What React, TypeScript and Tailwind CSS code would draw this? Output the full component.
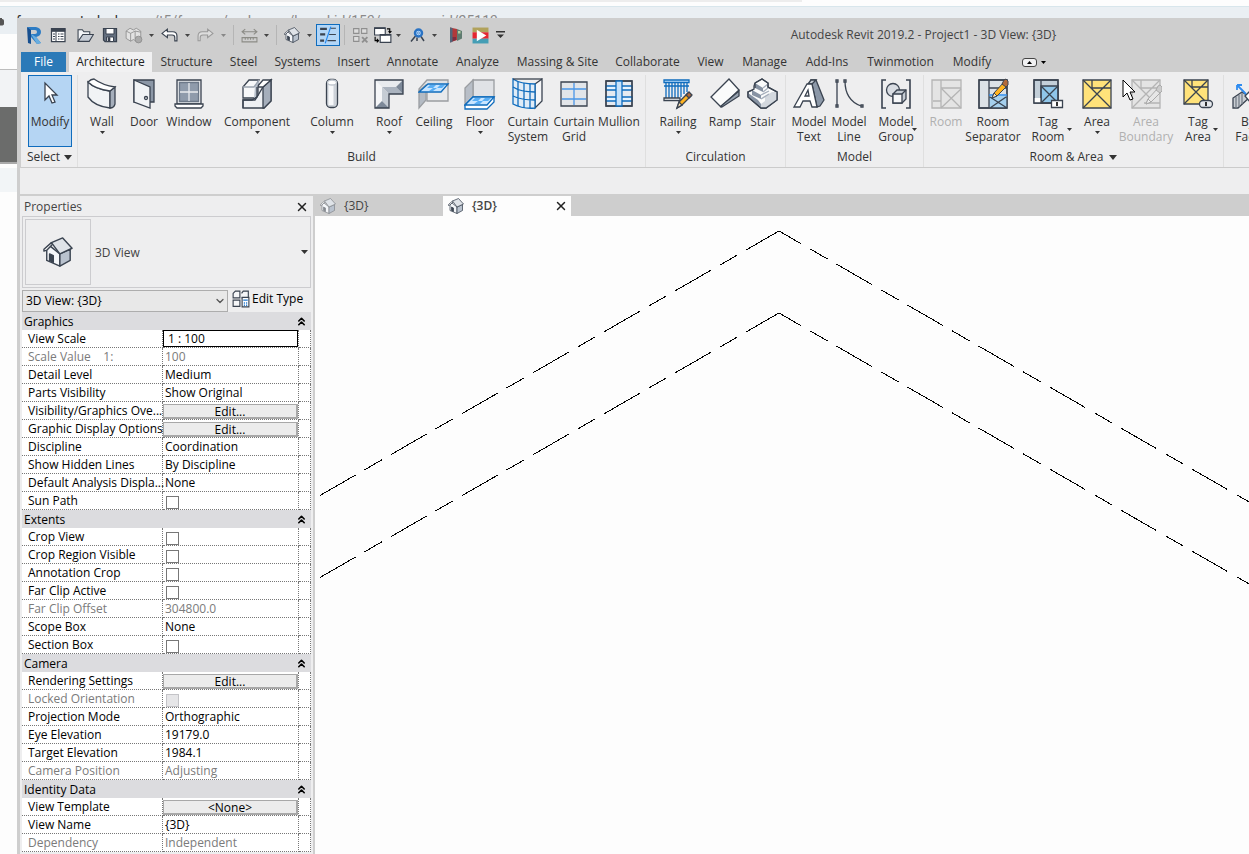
import React from "react";
import { ChevronDown, ChevronsUp, Lock, X } from "lucide-react";
import { clsx } from "clsx";

const ink = "#3a4350";
const blue = "#0f6cbd";

function Svg({ size = 32, children }: { size?: number; children: React.ReactNode }) {
  return (
    <svg width={size} height={size} viewBox="0 0 32 32" fill="none" stroke={ink} strokeWidth="1.3" className="shrink-0" aria-hidden="true">
      {children}
    </svg>
  );
}

function Caret({ className = "" }: { className?: string }) {
  return (
    <svg width="5" height="3" viewBox="0 0 5 3" className={clsx("shrink-0", className)} aria-hidden="true">
      <path d="M0 0h5L2.500 3z" fill="currentColor" />
    </svg>
  );
}

function House({ size = 32, stroke = ink }: { size?: number; stroke?: string }) {
  return (
    <svg width={size} height={size} viewBox="0 0 32 32" stroke={stroke} strokeWidth="1.5" strokeLinejoin="round" className="shrink-0" aria-hidden="true">
      <path d="M4 14l4-4 10 8v13L4 25z" fill="#f4f6f9" />
      <path d="M18 18l11-5v12l-11 6z" fill="#b9c2ce" />
      <path d="M1 13l8-7 2 1-7 7-3 1z" fill="#fff" />
      <path d="M9 6l12-5 10 11-13 6z" fill="#dfe3e8" />
      <path d="M7 18l4 2v7l-4-2z" fill={stroke} />
    </svg>
  );
}

function Pencil({ muted = false }: { muted?: boolean }) {
  return (
    <g stroke={muted ? "#a9a9a9" : ink} strokeWidth="1">
      <path d="M17 15L27 4l4 3-11 11-5 2z" fill={muted ? "#e6e6e6" : "#ffb320"} />
      <path d="M25 6l2-4 2-1 2 2v4l-2 2z" fill={muted ? "#ccc" : "#b36a3a"} />
      <path d="M17 15l3 3-5 2z" fill={muted ? "#eee" : "#ffe7bb"} />
    </g>
  );
}

/* ---------- ribbon drawings ---------- */

const icons: Record<string, React.ReactNode> = {
  Modify: (
    <Svg>
      <path d="M11 5v17l4-4 3 7 3-1-3-7h5z" fill="#fff" />
    </Svg>
  ),
  Wall: (
    <Svg>
      <path d="M2 4c7 7 16 8 22 9v17C15 29 7 26 2 19z" fill="#f1f3f5" />
      <path d="M24 13l5-4v17q-1 4-5 4z" fill="#a5aebb" />
      <path d="M2 4q3-3 6-3c7 5 14 7 21 8l-5 4C16 12 8 10 2 4z" fill="#fff" />
    </Svg>
  ),
  Door: (
    <Svg>
      <path d="M6 2h20v22H6z" fill="#8c97a6" />
      <path d="M6 2l16 7v21L6 24z" fill="#f1f3f5" />
      <circle cx="18" cy="20" r="1.500" />
    </Svg>
  ),
  Window: (
    <Svg>
      <path d="M4 2h24v24H4z" fill="#e9ebee" />
      <path d="M6.500 4.500h19v19h-19z" fill="#8f9bab" stroke="#6c7888" />
      <path d="M16 5v18M7 14h18" stroke="#e9ebee" />
      <path d="M2 26h28v2l-2 2H4l-2-2z" fill="#fff" />
    </Svg>
  ),
  Component: (
    <Svg>
      <path d="M22 9l8-7v21l-7 7H2v-8h9l5-3z" fill="#eef0f3" />
      <path d="M22 9l8-7v21l-7 7h-1z" fill="#a5aebb" />
      <path d="M16 9l6-7h8l-8 7z" fill="#fff" />
      <path d="M2 9l6-7h10l-1 2v13l-3 3H2z" fill="#f7f8f9" />
      <path d="M14 8l4-6v3l-2 3v10l-3 2z" fill="#b9c1cc" stroke="none" />
      <path d="M2 9h11l5-7" stroke="#9aa3af" />
      <path d="M2 30v-8h12l2-3V9" />
    </Svg>
  ),
  Column: (
    <Svg>
      <rect x="10.500" y="1.500" width="11" height="28" rx="4" fill="#cdd2d9" />
      <path d="M14 7v20M16 7v20" stroke="#f7f8fa" strokeWidth="3" />
      <ellipse cx="16" cy="4.500" rx="4.500" ry="2.500" fill="#fff" stroke="#c0c6ce" />
    </Svg>
  ),
  Roof: (
    <Svg>
      <g stroke="none">
        <path d="M2 2h28l-7 7H9z" fill="#e8ebef" />
        <path d="M2 2l7 7v14l-7 7z" fill="#f5f6f8" />
        <path d="M9 9h14l7 7H16z" fill="#aab3bf" />
        <path d="M9 9l7 7v14l-7-7z" fill="#c5ccd4" />
        <path d="M30 2l-7 7 7 7z" fill="#7d8999" />
        <path d="M2 30l7-7 7 7z" fill="#7d8999" />
      </g>
      <path d="M2 2h28v14H16v14H2z" />
    </Svg>
  ),
  Ceiling: (
    <Svg>
      <path d="M9 6h21v17H9z" fill="#e8e9eb" stroke="#9a9da1" />
      <path d="M1 13l7-6v15l-7 8z" fill="#b4bbc4" stroke="#9a9da1" />
      <path d="M1 11l8-9h21v5H8l-7 6z" fill="#dfe2e6" stroke="#9a9da1" />
      <path d="M1 14l9-8h20l-7 8z" fill="#c9e5ff" stroke={blue} />
      <path d="M12 7h6l-3 3H9zM22 7h5l-3 3h-5zM15 10h4l-4 3h-4z" fill="#58aef5" stroke="none" />
    </Svg>
  ),
  Floor: (
    <Svg>
      <path d="M9 2h21v18H9z" fill="#e0e2e6" stroke="#9a9da1" />
      <path d="M1 10l8-8v18l-8 7z" fill="#b8bec7" stroke="#9a9da1" />
      <path d="M1 27l8-8h21v5l-7 7H1z" fill="#fff" stroke={blue} />
      <path d="M1 27l8-8h21l-7 8z" fill="#c9e5ff" stroke={blue} />
      <path d="M11 20h6l-3 3H8zM21 20h6l-3 3h-6zM14 23h5l-3 3h-6z" fill="#58aef5" stroke="none" />
    </Svg>
  ),
  "Curtain System": (
    <Svg>
      <path d="M23 6l7-5v22l-7 7z" fill="#f5f6f8" />
      <path d="M1 1c6 4 15 5 22 5v24C14 31 7 29 1 26z" fill="#e1ecf7" stroke={blue} />
      <path d="M1 9c6 4 15 5 22 5M1 18c6 3 15 4 22 4M6 4v24M12 5v25M18 6v24" stroke={blue} />
      <path d="M1 1h29" />
    </Svg>
  ),
  "Curtain Grid": (
    <Svg>
      <path d="M3 4h26v24H3z" fill="#e2e5e9" />
      <path d="M16 5v22M4 11h24M4 21h24" stroke="#4a96e8" />
    </Svg>
  ),
  Mullion: (
    <Svg>
      <path d="M3 3h26v25H3z" fill="#e6eaf0" />
      <path d="M3 8h26v4H3zM3 19h26v4H3z" fill="#e5f3ff" stroke={blue} />
      <path d="M3 3h26v25H3z" />
      <path d="M13 3h6v25h-6z" fill="#c7e2fb" stroke={blue} />
    </Svg>
  ),
  Railing: (
    <Svg>
      <path d="M4 5v15M7 5v15M10 5v15M13 5v15M16 5v15M19 5v14M22 5v11M25 5v9" stroke={blue} />
      <path d="M2 2h25v2.500H2zM2 8h25" fill="#bfe0ff" stroke={blue} />
      <path d="M2 20h16v2.500H2z" fill="#fff" />
      <path d="M17 24l9-9 3 3-9 9-5 3z" fill="#ffb320" />
      <path d="M24 17l3-3 3 3-3 3z" fill="#b36a3a" />
      <path d="M17 24l3 3-5 3z" fill="#ffe7bb" />
    </Svg>
  ),
  Ramp: (
    <Svg>
      <path d="M2 19L20 1l10 11-18 17z" fill="#fafbfb" />
      <path d="M12 28l18-15v5L13 29z" fill="#98a3b1" />
    </Svg>
  ),
  Stair: (
    <Svg>
      <path d="M8 5l7-4 6 4v4l9 5v8l-11 8h-5L1 19v-5l6-3V8z" fill="#fafbfb" />
      <path d="M30 14v8l-11 8h-5v-4l4-3v-5l7-4z" fill="#d3d8de" stroke="none" />
      <path d="M8 5l8 5v4l-8-4zM5 12l9 5v4l-9-4zM1 15l10 7 3 4v3L1 19z" fill="#8793a3" stroke="none" />
      <path d="M16 10l5-4M16 14l5-4M14 17l8-4M14 21l8-5" stroke="#a5aebb" />
      <path d="M8 5l7-4 6 4v4l9 5v8l-11 8h-5L1 19v-5l5-2M8 5v5" />
    </Svg>
  ),
  "Model Text": (
    <Svg>
      <path d="M18 2h5l8 20-4 6-3 1z" fill="#8c98a8" />
      <path d="M15 6l3-4h5l-4 4z" fill="#c5ccd4" />
      <path d="M1 29L14 6h5l5 23h-5l-2-6h-7l-3 6zM12 18h4l-1-6z" fill="#fff" fillRule="evenodd" />
    </Svg>
  ),
  "Model Line": (
    <Svg>
      <path d="M4 3v25M12 3c0 12 5 21 16 25" />
      <path d="M3 2h2v2H3zM3 27h2v2H3zM11 2h2v2h-2zM28 27h2v2h-2z" fill="#fff" />
    </Svg>
  ),
  "Model Group": (
    <Svg>
      <path d="M6 2H2v28h4M26 2h4v28h-4" strokeWidth="1.600" />
      <circle cx="13" cy="12" r="6.500" fill="#d9dde3" />
      <path d="M13 16l4-4h9v9l-4 4h-9z" fill="#c5ccd4" />
      <path d="M13 16h9v9h-9z" fill="#f6f7f9" />
      <path d="M22 16l4-4" />
    </Svg>
  ),
  Room: (
    <Svg>
      <g stroke="#b4b4b4">
        <path d="M2 2h29v28H2z" fill="#e4e4e4" />
        <path d="M11 2v28M11 10h20M12 11l19 19M31 11L11 30M3 23h8" />
      </g>
    </Svg>
  ),
  "Room Separator": (
    <Svg>
      <path d="M2 2h28v28H2z" fill="#dce2e7" />
      <path d="M12 16h18v14H12z" fill="#a5d0ee" stroke="none" />
      <path d="M12 2v28M12 10h18M13 19l17 11M29 19L13 30M2 2h28v28H2z" />
      <path d="M12 17h18" stroke="#2f8cf0" />
      <Pencil />
    </Svg>
  ),
  "Tag Room": (
    <Svg>
      <path d="M2 2h24v23H2z" fill="#c3cfd9" />
      <path d="M9 8h17v17H9z" fill="#8fc6ea" />
      <path d="M2 20h7v5H2z" fill="#fff" stroke="none" />
      <path d="M9 2v23M9 8l17 17M26 8L9 25M2 2h24v23H2z" />
      <path d="M19.500 22.500h11v7h-11z" fill="#fff" />
      <path d="M25 24v4" strokeWidth="1.600" stroke="#000" />
    </Svg>
  ),
  Area: (
    <Svg>
      <path d="M2 2h28v28H2z" fill="#ffe27a" />
      <path d="M2 2l28 28M30 2L2 30M11 2v9M11 10h19" />
    </Svg>
  ),
  "Area Boundary": (
    <Svg>
      <g stroke="#b4b4b4">
        <path d="M2 2h28v28H2z" fill="#e4e4e4" />
        <path d="M2 2l20 20M30 2L2 30M11 2v9M11 10h19M14 25h16" />
      </g>
      <g transform="translate(1 6)">
        <Pencil muted />
      </g>
    </Svg>
  ),
  "Tag Area": (
    <Svg>
      <path d="M2 2h24v24H2z" fill="#ffe27a" />
      <path d="M2 2l24 24M26 2L2 26M10 2v7M10 9h16" />
      <rect x="17.500" y="22.500" width="13" height="7" rx="3.500" fill="#e6e9ed" />
      <path d="M24 24v4" strokeWidth="1.600" stroke="#000" />
    </Svg>
  ),
  "By Face": (
    <Svg>
      <path d="M1 30V20l9-6 8 5-12 11z" fill="#c9cdd3" />
      <path d="M4 30V19M7 29V17M10 26V15" stroke="#777f89" />
      <path d="M13 18L27 4l4 2v6L18 24z" fill="#fff" />
      <path d="M5 7l9 9M5 7h5M5 7v5" stroke="#2f8cf0" strokeWidth="1.800" />
    </Svg>
  ),
};

type Tool = { name: string; width: string; menu?: "below" | "side"; disabled?: boolean; pointer?: boolean };
type Group = { title: string; className: string; indent: string; menu?: boolean; tools: Tool[] };

const groups: Group[] = [
  {
    title: "Build",
    className: "w-[568px]",
    indent: "pl-1",
    tools: [
      { name: "Wall", width: "w-10", menu: "below" },
      { name: "Door", width: "w-11" },
      { name: "Window", width: "w-[46px]" },
      { name: "Component", width: "w-[90px]", menu: "below" },
      { name: "Column", width: "w-[60px]", menu: "below" },
      { name: "Roof", width: "w-[54px]", menu: "below" },
      { name: "Ceiling", width: "w-9" },
      { name: "Floor", width: "w-14", menu: "below" },
      { name: "Curtain System", width: "w-10" },
      { name: "Curtain Grid", width: "w-[52px]" },
      { name: "Mullion", width: "w-[38px]" },
    ],
  },
  {
    title: "Circulation",
    className: "w-[140px]",
    indent: "pl-[7px]",
    tools: [
      { name: "Railing", width: "w-[50px]", menu: "below" },
      { name: "Ramp", width: "w-11" },
      { name: "Stair", width: "w-8" },
    ],
  },
  {
    title: "Model",
    className: "w-[138px]",
    indent: "pl-[5px]",
    tools: [
      { name: "Model Text", width: "w-9" },
      { name: "Model Line", width: "w-11" },
      { name: "Model Group", width: "w-[50px]", menu: "side" },
    ],
  },
  {
    title: "Room & Area",
    className: "w-[300px]",
    indent: "pl-0.5",
    menu: true,
    tools: [
      { name: "Room", width: "w-10", disabled: true },
      { name: "Room Separator", width: "w-[54px]" },
      { name: "Tag Room", width: "w-14", menu: "side" },
      { name: "Area", width: "w-[42px]", menu: "below" },
      { name: "Area Boundary", width: "w-14", disabled: true, pointer: true },
      { name: "Tag Area", width: "w-12", menu: "side" },
    ],
  },
  { title: "", className: "w-14", indent: "", tools: [{ name: "By Face", width: "w-12" }] },
];

const ribbonTabs = [
  { name: "Structure", width: "w-[69px]" },
  { name: "Steel", width: "w-[45px]" },
  { name: "Systems", width: "w-[63px]" },
  { name: "Insert", width: "w-[49px]" },
  { name: "Annotate", width: "w-[69px]" },
  { name: "Analyze", width: "w-[61px]" },
  { name: "Massing & Site", width: "w-[99px]" },
  { name: "Collaborate", width: "w-[81px]" },
  { name: "View", width: "w-[45px]" },
  { name: "Manage", width: "w-[63px]" },
  { name: "Add-Ins", width: "w-[62px]" },
  { name: "Twinmotion", width: "w-[85px]" },
  { name: "Modify", width: "w-[58px]" },
];

function ToolButton({ tool }: { tool: Tool }) {
  return (
    <button
      disabled={tool.disabled}
      className={clsx(
        "relative flex h-[72px] shrink-0 flex-col items-center pt-[3px] leading-[15px]",
        tool.width,
        tool.disabled ? "text-[#b0b0b0]" : "text-[#333]"
      )}
    >
      {icons[tool.name]}
      <span className="mt-1 flex flex-col items-center whitespace-nowrap">
        {tool.name.split(" ").map((word) => (
          <span key={word}>{word}</span>
        ))}
      </span>
      {tool.menu === "below" && <Caret className="mt-0.5" />}
      {tool.menu === "side" && <Caret className="absolute bottom-4 right-1" />}
      {tool.pointer && (
        <svg width="14" height="23" viewBox="0 0 14 23" className="absolute left-1 top-1" aria-hidden="true">
          <path d="M1 1v17l4-4 3 7 3-1-3-7h5z" fill="#fff" stroke="#000" />
        </svg>
      )}
    </button>
  );
}

/* ---------- quick access toolbar ---------- */

function Quick({ label, width, children }: { label: string; width: string; children: React.ReactNode }) {
  return (
    <button aria-label={label} className={clsx("flex h-6 shrink-0 items-center justify-center text-[#444]", width)}>
      {children}
    </button>
  );
}

function Divider({ width }: { width: string }) {
  return (
    <div className={clsx("flex shrink-0 justify-center", width)}>
      <div className="h-5 w-px bg-[#b5b5b5]" />
    </div>
  );
}

function QuickAccess() {
  return (
    <div className="flex h-[34px] items-center">
      <Quick label="Revit" width="w-[25px]">
        <svg width="16" height="19" viewBox="0 0 16 19" className="shrink-0" aria-hidden="true">
          <path d="M1 1l4 2v15l-3-1z" fill="#174f8f" />
          <path d="M1 1h9q5 1 5 5t-5 5l5 6-4 1-6-7V8h4q2 0 2-2T9 4H5z" fill="#2d7cc4" />
          <path d="M5 8l5 3 5 6-4 1z" fill="#69aee0" />
        </svg>
      </Quick>
      <Quick label="Home" width="w-6">
        <Svg size={16}>
          <path d="M3 3h27v26H3z" fill="#fff" strokeWidth="2.500" />
          <path d="M3 3h27v6H3z" fill={ink} />
          <path d="M12 9v20M6 14h4M6 19h4M6 24h4M16 14h3M21 14h6M16 19h3M21 19h6M16 24h3M21 24h6" strokeWidth="2" />
        </Svg>
      </Quick>
      <Quick label="Open" width="w-[30px]">
        <Svg size={17}>
          <path d="M2 27V5h8l3 4h11v5" fill="#f3f5f8" strokeWidth="2" />
          <path d="M2 27l9-13h20l-8 13z" fill="#c8ced7" strokeWidth="2" />
        </Svg>
      </Quick>
      <Quick label="Save" width="w-5">
        <Svg size={16}>
          <path d="M3 3h26v26H6l-3-3z" fill="#657080" strokeWidth="2.500" />
          <path d="M8 3h16v11H8zM9 20h14v9H9z" fill="#fff" strokeWidth="2" />
          <path d="M12 21h4v7h-4z" fill={ink} />
        </Svg>
      </Quick>
      <Quick label="Synchronize" width="w-7">
        <Svg size={18}>
          <g stroke="#8d8d8d" strokeWidth="1.500">
            <path d="M2 9l7-5 6 3 5-3 8 5v13l-8 5-5-3-5 3-8-5z" fill="#e2e2e2" />
            <path d="M2 9l8 4v14M10 13l8-4 10 2M18 9v14" />
            <circle cx="24" cy="24" r="6" fill="#aaa" />
          </g>
        </Svg>
      </Quick>
      <Quick label="Synchronize menu" width="w-1.5"><Caret /></Quick>
      <Quick label="Undo" width="w-[30px]">
        <Svg size={17}>
          <path d="M12 4L2 12l10 8v-5h9q5 0 5 5v6h4v-9q0-8-8-8H12z" fill="#fff" strokeWidth="2.200" />
        </Svg>
      </Quick>
      <Quick label="Undo menu" width="w-1.5"><Caret /></Quick>
      <Quick label="Redo" width="w-[30px]">
        <Svg size={17}>
          <path d="M20 4l10 8-10 8v-5h-9q-5 0-5 5v6H2v-9q0-8 8-8h10z" fill="#ddd" stroke="#999" strokeWidth="2" />
        </Svg>
      </Quick>
      <Quick label="Redo menu" width="w-1.5"><Caret className="text-[#888]" /></Quick>
      <Divider width="w-3.5" />
      <Quick label="Measure" width="w-[18px]">
        <Svg size={17}>
          <path d="M2 9h28M8 4L2 9l6 5M24 4l6 5-6 5M2 20h28v8H2zM8 20v4M13 20v4M18 20v4M23 20v4" stroke="#8c8c86" strokeWidth="2" />
        </Svg>
      </Quick>
      <Quick label="Measure menu" width="w-4"><Caret /></Quick>
      <Divider width="w-[5px]" />
      <Quick label="Default 3D view" width="w-[25px]"><House size={16} /></Quick>
      <Quick label="3D view menu" width="w-2.5"><Caret /></Quick>
      <div className="flex w-7 shrink-0 justify-center">
        <button aria-label="Thin lines" className="flex h-[22px] w-6 items-center justify-center border border-[#0f6cbd] bg-[#b3d6f7]">
          <Svg size={18}>
            <path d="M2 5h12M2 15h9M2 26h7" strokeWidth="4" />
            <path d="M20 4h10M18 15h12M15 26h15" strokeWidth="2" />
            <path d="M21 1L11 31" stroke="#1f86f0" strokeWidth="2" />
          </Svg>
        </button>
      </div>
      <Divider width="w-1" />
      <Quick label="Close hidden windows" width="w-7">
        <Svg size={17}>
          <g stroke="#8f8f8f" strokeWidth="2">
            <path d="M3 3h10v9H3zM18 3h10v9H18zM3 18h10v9H3z" fill="#ddd" />
            <path d="M19 19l10 10M29 19L19 29" strokeWidth="3.500" />
          </g>
        </Svg>
      </Quick>
      <Quick label="Switch windows" width="w-[18px]">
        <Svg size={18}>
          <path d="M1 3h19v13H1zM11 15h19v14H11z" fill="#fff" strokeWidth="2" />
          <path d="M1 4h19M11 16h19" strokeWidth="3" />
          <path d="M23 5h5v6M26 9l2 3 3-3M7 26H2v-7M5 23l3 3-3 3" stroke="#000" strokeWidth="2" />
        </Svg>
      </Quick>
      <Quick label="Window menu" width="w-3"><Caret /></Quick>
      <Quick label="Find" width="w-7">
        <Svg size={16}>
          <path d="M11 18l-9 11M22 19l6 9M14 21v7" strokeWidth="3" />
          <circle cx="17" cy="12" r="7" fill="#b8dcff" stroke="#2a73c4" strokeWidth="5" />
          <circle cx="17" cy="12" r="2" fill="#fff" stroke="#1762b5" />
        </Svg>
      </Quick>
      <Quick label="Find menu" width="w-[5px]"><Caret /></Quick>
      <Quick label="Enscape" width="w-[38px]">
        <Svg size={16}>
          <g stroke="none">
            <path d="M4 1l14 3v22L4 31z" fill="#b23a3a" />
            <path d="M18 4l10 4v15l-10 5z" fill="#5f7b70" />
            <path d="M6 20h10v6L6 29z" fill="#7d2e40" />
            <path d="M4 1l5 1v28l-5 1z" fill="#526579" />
            <path d="M20 8h5v5h-5z" fill="#b5d0a0" />
          </g>
        </Svg>
      </Quick>
      <Quick label="Twinmotion" width="w-2.5">
        <Svg size={17}>
          <g stroke="none">
            <path d="M1 1h30v9H1z" fill="#b1a25b" />
            <path d="M1 10h30v12H1z" fill="#e52630" />
            <path d="M1 22h30v9H1z" fill="#459eb5" />
            <path d="M9 5l18 11L9 27z" fill="#fff" />
          </g>
        </Svg>
      </Quick>
      <Quick label="Customize" width="w-[30px]">
        <svg width="9" height="8" viewBox="0 0 9 8" className="shrink-0" aria-hidden="true">
          <path d="M0 0h9v1.500H0zM1 3.500h7L4.500 7z" fill="#333" />
        </svg>
      </Quick>
      <h1 className="flex-1 whitespace-nowrap pl-[83px] text-center text-[#444]">
        Autodesk Revit 2019.2 - Project1 - 3D View: {"{3D}"}
      </h1>
    </div>
  );
}

function RibbonTabs() {
  return (
    <nav className="flex h-5 items-stretch whitespace-nowrap text-[#333]">
      <button className="w-[45px] shrink-0 bg-[#2b7ab8] text-white">File</button>
      <button className="ml-[3px] w-[83px] shrink-0 bg-[#f1f1f2] text-[#222]">Architecture</button>
      {ribbonTabs.map((tab) => (
        <button key={tab.name} className={clsx("flex shrink-0 items-center justify-center", tab.width)}>
          {tab.name}
        </button>
      ))}
      <button aria-label="Minimize ribbon" className="ml-[21px] flex items-center gap-1 text-black">
        <span className="flex h-[9px] w-[15px] items-center justify-center rounded-[3px] border border-[#444] bg-[#f1f1f2]">
          <Caret className="rotate-180" />
        </span>
        <Caret />
      </button>
    </nav>
  );
}

function Ribbon() {
  return (
    <div className="flex h-24 overflow-hidden border-b border-[#cbcbcb] bg-[#eeeeef] pt-[3px]">
      <div className="flex w-[57px] shrink-0 flex-col border-r border-[#dfdfdf] pl-[7px] text-[#333]">
        <button className="flex h-[72px] w-11 flex-col items-center border border-[#0f6cbd] bg-[#b5d5f3] pt-0.5 leading-[15px]">
          {icons.Modify}
          <span className="mt-1">Modify</span>
        </button>
        <button className="-ml-1 flex h-5 items-center gap-1 whitespace-nowrap pl-[3px]">
          Select
          <svg width="8" height="5" viewBox="0 0 8 5" className="shrink-0" aria-hidden="true"><path d="M0 0h8L4 5z" fill="#333" /></svg>
        </button>
      </div>
      {groups.map((group) => (
        <section key={group.title} className={clsx("shrink-0 border-r border-[#dfdfdf]", group.className)}>
          <div className={clsx("flex", group.indent)}>
            {group.tools.map((tool) => (
              <ToolButton key={tool.name} tool={tool} />
            ))}
          </div>
          <div className="flex h-5 items-center justify-center gap-1.5 text-[#333]">
            {group.title}
            {group.menu && (
              <svg width="8" height="5" viewBox="0 0 8 5" aria-hidden="true"><path d="M0 0h8L4 5z" fill="#333" /></svg>
            )}
          </div>
        </section>
      ))}
    </div>
  );
}

/* ---------- properties palette ---------- */

type Row = { label: string; value?: string; kind?: "button" | "check" | "input"; muted?: boolean };

const sections: { title: string; rows: Row[] }[] = [
  {
    title: "Graphics",
    rows: [
      { label: "View Scale", value: "1 : 100", kind: "input" },
      { label: "Scale Value    1:", value: "100", muted: true },
      { label: "Detail Level", value: "Medium" },
      { label: "Parts Visibility", value: "Show Original" },
      { label: "Visibility/Graphics Ove...", value: "Edit...", kind: "button" },
      { label: "Graphic Display Options", value: "Edit...", kind: "button" },
      { label: "Discipline", value: "Coordination" },
      { label: "Show Hidden Lines", value: "By Discipline" },
      { label: "Default Analysis Displa...", value: "None" },
      { label: "Sun Path", kind: "check" },
    ],
  },
  {
    title: "Extents",
    rows: [
      { label: "Crop View", kind: "check" },
      { label: "Crop Region Visible", kind: "check" },
      { label: "Annotation Crop", kind: "check" },
      { label: "Far Clip Active", kind: "check" },
      { label: "Far Clip Offset", value: "304800.0", muted: true },
      { label: "Scope Box", value: "None" },
      { label: "Section Box", kind: "check" },
    ],
  },
  {
    title: "Camera",
    rows: [
      { label: "Rendering Settings", value: "Edit...", kind: "button" },
      { label: "Locked Orientation", kind: "check", muted: true },
      { label: "Projection Mode", value: "Orthographic" },
      { label: "Eye Elevation", value: "19179.0" },
      { label: "Target Elevation", value: "1984.1" },
      { label: "Camera Position", value: "Adjusting", muted: true },
    ],
  },
  {
    title: "Identity Data",
    rows: [
      { label: "View Template", value: "<None>", kind: "button" },
      { label: "View Name", value: "{3D}" },
      { label: "Dependency", value: "Independent", muted: true },
    ],
  },
];

function RowValue({ row }: { row: Row }) {
  if (row.kind === "button") {
    return (
      <button id={row.label} className="mt-0.5 block h-[15px] w-full border border-b-2 border-r-2 border-[#a8a8a8] bg-[#ececec] text-center leading-[13px]">
        {row.value}
      </button>
    );
  }
  if (row.kind === "check") {
    return (
      <input
        id={row.label}
        type="checkbox"
        disabled={row.muted}
        className="ml-[3px] mt-1 block size-[13px] appearance-none border border-[#777] bg-white disabled:border-[#c4c4c8] disabled:bg-[#e6e6e8]"
      />
    );
  }
  if (row.kind === "input") {
    return <input id={row.label} defaultValue={row.value} className="block h-[17px] w-full border border-black bg-white px-1 leading-[15px]" />;
  }
  return <span className="block pl-0.5">{row.value}</span>;
}

function PropertyTable() {
  return (
    <table className="w-full table-fixed border-separate border-spacing-0 bg-white text-left leading-[17px] text-black">
      <colgroup>
        <col />
        <col className="w-[136px]" />
        <col className="w-3" />
      </colgroup>
      {sections.map((section) => (
        <tbody key={section.title}>
          <tr className="bg-[#dcdcdf]">
            <th colSpan={2} scope="rowgroup" className="h-[18px] p-0 pl-0.5 font-normal">{section.title}</th>
            <td className="p-0">
              <button aria-label={`Collapse ${section.title}`} className="-ml-1 flex">
                <ChevronsUp size={13} strokeWidth={3} />
              </button>
            </td>
          </tr>
          {section.rows.map((row) => (
            <tr key={row.label} className={row.muted ? "text-[#7b7b7b]" : ""}>
              <th scope="row" className="h-[18px] whitespace-pre border-b border-r border-dotted border-[#777] p-0 pl-1.5 font-normal">
                {row.kind ? <label htmlFor={row.label}>{row.label}</label> : row.label}
              </th>
              <td className="h-[18px] whitespace-nowrap border-b border-r border-dotted border-[#777] p-0 align-top">
                <RowValue row={row} />
              </td>
              <td className="border-b border-r border-dotted border-[#777] p-0" />
            </tr>
          ))}
        </tbody>
      ))}
    </table>
  );
}

function Properties() {
  return (
    <aside className="w-[293px] shrink-0 overflow-hidden bg-[#eeeeef] px-0.5">
      <div className="flex h-5 items-center justify-between px-0.5 pt-0.5 text-[#444]">
        <h2>Properties</h2>
        <button aria-label="Close properties"><X size={14} strokeWidth={2.5} color="#222" /></button>
      </div>
      <div className="flex h-[72px] items-center border border-[#cccccf] p-0.5">
        <div className="flex size-[66px] items-center justify-center border border-[#cccccf]">
          <House size={30} />
        </div>
        <span className="flex-1 pl-1 pt-0.5 text-[#444]">3D View</span>
        <button aria-label="Type selector">
          <svg width="7" height="4" viewBox="0 0 7 4" aria-hidden="true"><path d="M0 0h7L3.500 4z" fill="#333" /></svg>
        </button>
      </div>
      <div className="flex h-6 items-center pt-px">
        <div className="relative w-[206px]">
          <select aria-label="View" className="block h-[22px] w-full appearance-none border border-[#adadad] bg-[#e8e8e8] pl-[3px] text-black">
            <option>3D View: {"{3D}"}</option>
          </select>
          <ChevronDown size={12} strokeWidth={2.5} className="pointer-events-none absolute right-0.5 top-[5px] text-[#555]" />
        </div>
        <button className="flex items-center gap-0.5 whitespace-nowrap pb-1 pl-1 text-black">
          <Svg size={18}>
            <path d="M2 6l4-4h8v12H2zM17 6l3-4h9v12H17M2 18h12v11H2z" fill="#f5f6f8" strokeWidth="2" />
            <path d="M18 13h12v17H18z" fill="#fff" strokeWidth="2" />
            <path d="M20 18h8M21 23h2M25 23h2M21 27h2M25 27h2" stroke="#1f78d0" strokeWidth="2.500" />
          </Svg>
          Edit Type
        </button>
      </div>
      <PropertyTable />
    </aside>
  );
}

/* ---------- drawing area ---------- */

function DrawingArea() {
  return (
    <main className="flex min-w-0 flex-1 flex-col border-l-2 border-[#cecece] bg-[#fdfdfd]">
      <div className="flex h-5 shrink-0 bg-[#cecece] text-[#444]">
        <button className="flex w-32 items-center gap-2 pl-[5px]">
          <House size={16} stroke="#85898f" />
          {"{3D}"}
        </button>
        <div className="flex w-32 items-center justify-between bg-[#fdfdfd] pl-[5px] pr-[3px]">
          <button className="flex items-center gap-2 font-semibold">
            <House size={16} />
            {"{3D}"}
          </button>
          <button aria-label="Close view"><X size={14} strokeWidth={2.5} color="#222" /></button>
        </div>
      </div>
      <svg className="min-h-0 w-full flex-1" fill="none" stroke="#000" strokeWidth="1" strokeDasharray="41 10.500 20 10.500" shapeRendering="crispEdges" role="img" aria-label="Roof outline">
        <path d="M5 279.500L464 15M5 361.500L464 97" />
        <path d="M464 15L1864 822M464 97L1864 904" strokeDashoffset="15.500" />
      </svg>
    </main>
  );
}

export default function App() {
  return (
    <div className="flex h-screen flex-col overflow-hidden bg-[#fdfdfd] font-['Open_Sans','Noto_Sans',sans-serif] text-[12px]">
      {/* browser page behind the window */}
      <div className="h-[18px] shrink-0 overflow-hidden">
        <div className="flex h-0.5">
          <div className="w-[802px] bg-[#ededed]" />
        </div>
        <div className="mt-1 flex h-6 border-t border-[#d8e6ec] bg-[#eaeff3] pl-4 pt-1">
          <a href="#page" className="whitespace-nowrap font-['Roboto',sans-serif] text-[14px] leading-5 text-[#8a8a8a]">
            <span className="text-[#333]">forums.autodesk.com</span>/t5/forums/replypage/board-id/153/message-id/25113
          </a>
        </div>
      </div>
      <div className="flex min-h-0 flex-1">
        <div className="w-[17px] shrink-0">
          <div className="h-4 overflow-hidden bg-[#eaeff3]">
            <Lock size={12} className="-ml-[7px] -mt-1" fill="#555" color="#555" />
          </div>
          <div className="h-9 border-b border-[#bdbdbd]" />
          <div className="h-[37px] bg-[#f2f3f5]" />
          <div className="h-[57px] border-b-2 border-[#aaa] bg-[#6b6c6b]" />
          <div className="mt-1 h-6 bg-[#f2f5f7]" />
        </div>
        <div className="flex min-w-0 flex-1 flex-col border-l-[3px] border-[#cecece]">
          <header className="shrink-0 overflow-hidden bg-[#cecece] pl-px">
            <QuickAccess />
            <RibbonTabs />
            <Ribbon />
          </header>
          <div className="h-7 shrink-0 border-b-2 border-[#cecece] bg-[#eeeeef]" />
          <div className="flex min-h-0 flex-1">
            <Properties />
            <DrawingArea />
          </div>
        </div>
      </div>
    </div>
  );
}
